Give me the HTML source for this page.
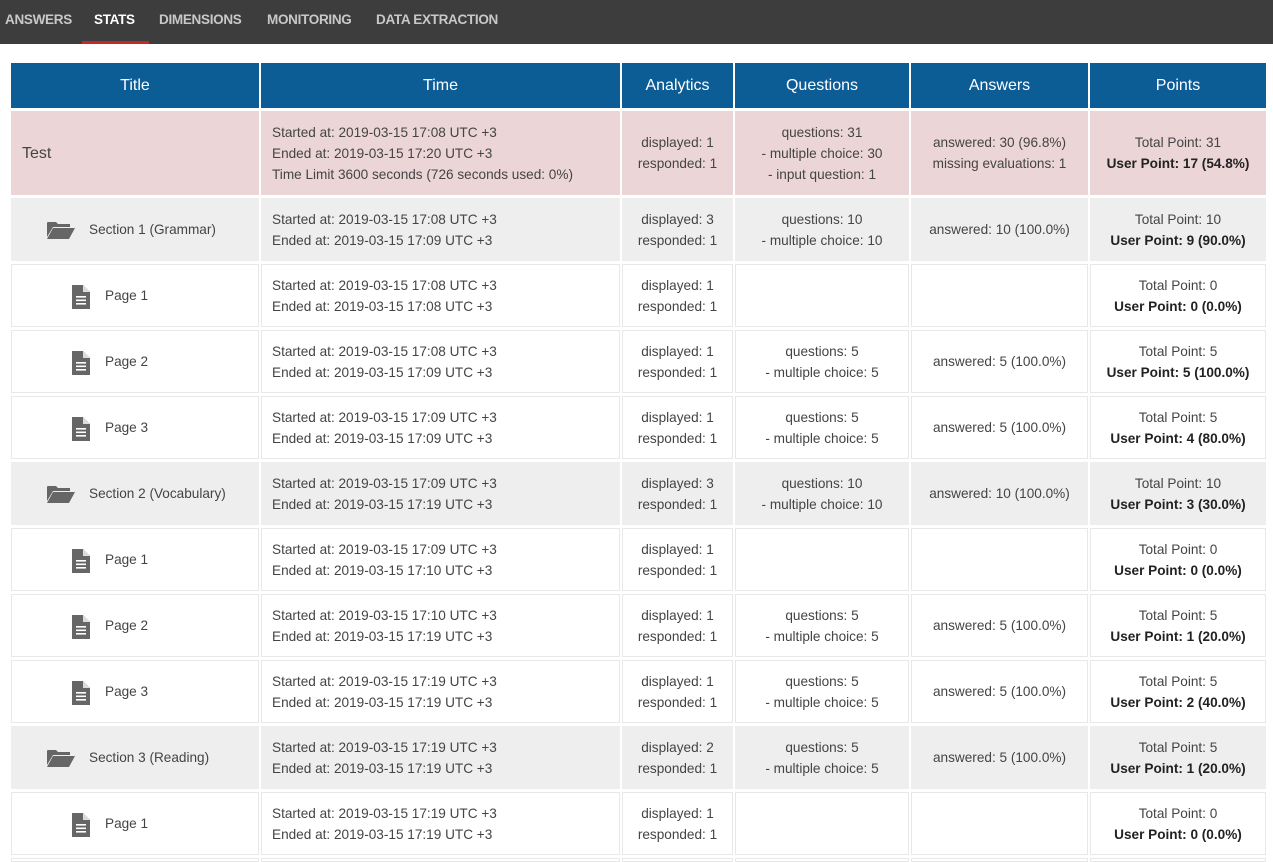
<!DOCTYPE html>
<html style="overflow:hidden;height:862px"><head><meta charset="utf-8"><style>
*{box-sizing:border-box}
body{margin:0;width:1273px;height:862px;overflow:hidden;background:#fff;font-family:"Liberation Sans",Arial,sans-serif;color:#444;position:relative}
.nav{height:44px;background:#3d3d3d;position:relative}
.nav span{position:absolute;top:12px;font-size:13.5px;font-weight:bold;color:#c8c8c8;letter-spacing:-0.3px}
.nav .act{color:#fff}
.nav .ul{position:absolute;left:82px;top:41px;width:67px;height:3px;background:#c62828}
table{position:absolute;left:9px;top:60px;width:1259px;border-collapse:separate;border-spacing:2px 3px;table-layout:fixed}
td,th{padding:0;font-size:13.6px;line-height:21px;text-align:center;vertical-align:middle;white-space:nowrap}
th{background:#0c5c96;color:#fff;font-size:16px;font-weight:normal;height:45px}
td{border:1px solid #e8e8e8;height:63px;background:#fff}
tr.t td{background:#ecd5d6;border-color:#ecd5d6;height:84px}
tr.s td{background:#eeeeee;border-color:#eeeeee}
td.tm{text-align:left;padding-left:10px}
td.ti{text-align:left;position:relative}
.test{font-size:16px;padding-left:10px}
.sec{padding-left:77px}
.pg{padding-left:93px}
svg{position:absolute}
b{color:#222}
</style></head><body>
<div class="nav"><span style="left:5px">ANSWERS</span><span class="act" style="left:94px">STATS</span><span style="left:159px">DIMENSIONS</span><span style="left:267px">MONITORING</span><span style="left:376px">DATA EXTRACTION</span><div class="ul"></div></div>
<table>
<colgroup><col style="width:248px"><col style="width:359px"><col style="width:111px"><col style="width:174px"><col style="width:177px"><col style="width:176px"></colgroup>
<tr><th>Title</th><th>Time</th><th>Analytics</th><th>Questions</th><th>Answers</th><th>Points</th></tr>
<tr class="t"><td class="ti test">Test</td><td class="tm">Started at: 2019-03-15 17:08 UTC +3<br>Ended at: 2019-03-15 17:20 UTC +3<br>Time Limit 3600 seconds (726 seconds used: 0%)</td><td>displayed: 1<br>responded: 1</td><td>questions: 31<br>- multiple choice: 30<br>- input question: 1</td><td>answered: 30 (96.8%)<br>missing evaluations: 1</td><td>Total Point: 31<br><b>User Point: 17 (54.8%)</b></td></tr>
<tr class="s"><td class="ti sec"><svg style="left:35px;top:23px" width="28" height="17" viewBox="0 0 28 17"><path d="M0 1Q0 0 1 0H9L11 2H23V5H6L0 15Z" fill="#666"/><path d="M6 6H28L22 17H0Z" fill="#666"/></svg>Section 1 (Grammar)</td><td class="tm">Started at: 2019-03-15 17:08 UTC +3<br>Ended at: 2019-03-15 17:09 UTC +3</td><td>displayed: 3<br>responded: 1</td><td>questions: 10<br>- multiple choice: 10</td><td>answered: 10 (100.0%)</td><td>Total Point: 10<br><b>User Point: 9 (90.0%)</b></td></tr>
<tr><td class="ti pg"><svg style="left:60px;top:20px" width="18" height="24" viewBox="0 0 18 24"><path d="M0 0H11L18 7V24H0Z" fill="#666"/><path d="M11 0V7H18" fill="#ddd"/><rect x="4" y="11" width="10" height="1.6" fill="#fff"/><rect x="4" y="14.5" width="10" height="1.6" fill="#fff"/><rect x="4" y="18" width="10" height="1.6" fill="#fff"/></svg>Page 1</td><td class="tm">Started at: 2019-03-15 17:08 UTC +3<br>Ended at: 2019-03-15 17:08 UTC +3</td><td>displayed: 1<br>responded: 1</td><td></td><td></td><td>Total Point: 0<br><b>User Point: 0 (0.0%)</b></td></tr>
<tr><td class="ti pg"><svg style="left:60px;top:20px" width="18" height="24" viewBox="0 0 18 24"><path d="M0 0H11L18 7V24H0Z" fill="#666"/><path d="M11 0V7H18" fill="#ddd"/><rect x="4" y="11" width="10" height="1.6" fill="#fff"/><rect x="4" y="14.5" width="10" height="1.6" fill="#fff"/><rect x="4" y="18" width="10" height="1.6" fill="#fff"/></svg>Page 2</td><td class="tm">Started at: 2019-03-15 17:08 UTC +3<br>Ended at: 2019-03-15 17:09 UTC +3</td><td>displayed: 1<br>responded: 1</td><td>questions: 5<br>- multiple choice: 5</td><td>answered: 5 (100.0%)</td><td>Total Point: 5<br><b>User Point: 5 (100.0%)</b></td></tr>
<tr><td class="ti pg"><svg style="left:60px;top:20px" width="18" height="24" viewBox="0 0 18 24"><path d="M0 0H11L18 7V24H0Z" fill="#666"/><path d="M11 0V7H18" fill="#ddd"/><rect x="4" y="11" width="10" height="1.6" fill="#fff"/><rect x="4" y="14.5" width="10" height="1.6" fill="#fff"/><rect x="4" y="18" width="10" height="1.6" fill="#fff"/></svg>Page 3</td><td class="tm">Started at: 2019-03-15 17:09 UTC +3<br>Ended at: 2019-03-15 17:09 UTC +3</td><td>displayed: 1<br>responded: 1</td><td>questions: 5<br>- multiple choice: 5</td><td>answered: 5 (100.0%)</td><td>Total Point: 5<br><b>User Point: 4 (80.0%)</b></td></tr>
<tr class="s"><td class="ti sec"><svg style="left:35px;top:23px" width="28" height="17" viewBox="0 0 28 17"><path d="M0 1Q0 0 1 0H9L11 2H23V5H6L0 15Z" fill="#666"/><path d="M6 6H28L22 17H0Z" fill="#666"/></svg>Section 2 (Vocabulary)</td><td class="tm">Started at: 2019-03-15 17:09 UTC +3<br>Ended at: 2019-03-15 17:19 UTC +3</td><td>displayed: 3<br>responded: 1</td><td>questions: 10<br>- multiple choice: 10</td><td>answered: 10 (100.0%)</td><td>Total Point: 10<br><b>User Point: 3 (30.0%)</b></td></tr>
<tr><td class="ti pg"><svg style="left:60px;top:20px" width="18" height="24" viewBox="0 0 18 24"><path d="M0 0H11L18 7V24H0Z" fill="#666"/><path d="M11 0V7H18" fill="#ddd"/><rect x="4" y="11" width="10" height="1.6" fill="#fff"/><rect x="4" y="14.5" width="10" height="1.6" fill="#fff"/><rect x="4" y="18" width="10" height="1.6" fill="#fff"/></svg>Page 1</td><td class="tm">Started at: 2019-03-15 17:09 UTC +3<br>Ended at: 2019-03-15 17:10 UTC +3</td><td>displayed: 1<br>responded: 1</td><td></td><td></td><td>Total Point: 0<br><b>User Point: 0 (0.0%)</b></td></tr>
<tr><td class="ti pg"><svg style="left:60px;top:20px" width="18" height="24" viewBox="0 0 18 24"><path d="M0 0H11L18 7V24H0Z" fill="#666"/><path d="M11 0V7H18" fill="#ddd"/><rect x="4" y="11" width="10" height="1.6" fill="#fff"/><rect x="4" y="14.5" width="10" height="1.6" fill="#fff"/><rect x="4" y="18" width="10" height="1.6" fill="#fff"/></svg>Page 2</td><td class="tm">Started at: 2019-03-15 17:10 UTC +3<br>Ended at: 2019-03-15 17:19 UTC +3</td><td>displayed: 1<br>responded: 1</td><td>questions: 5<br>- multiple choice: 5</td><td>answered: 5 (100.0%)</td><td>Total Point: 5<br><b>User Point: 1 (20.0%)</b></td></tr>
<tr><td class="ti pg"><svg style="left:60px;top:20px" width="18" height="24" viewBox="0 0 18 24"><path d="M0 0H11L18 7V24H0Z" fill="#666"/><path d="M11 0V7H18" fill="#ddd"/><rect x="4" y="11" width="10" height="1.6" fill="#fff"/><rect x="4" y="14.5" width="10" height="1.6" fill="#fff"/><rect x="4" y="18" width="10" height="1.6" fill="#fff"/></svg>Page 3</td><td class="tm">Started at: 2019-03-15 17:19 UTC +3<br>Ended at: 2019-03-15 17:19 UTC +3</td><td>displayed: 1<br>responded: 1</td><td>questions: 5<br>- multiple choice: 5</td><td>answered: 5 (100.0%)</td><td>Total Point: 5<br><b>User Point: 2 (40.0%)</b></td></tr>
<tr class="s"><td class="ti sec"><svg style="left:35px;top:23px" width="28" height="17" viewBox="0 0 28 17"><path d="M0 1Q0 0 1 0H9L11 2H23V5H6L0 15Z" fill="#666"/><path d="M6 6H28L22 17H0Z" fill="#666"/></svg>Section 3 (Reading)</td><td class="tm">Started at: 2019-03-15 17:19 UTC +3<br>Ended at: 2019-03-15 17:19 UTC +3</td><td>displayed: 2<br>responded: 1</td><td>questions: 5<br>- multiple choice: 5</td><td>answered: 5 (100.0%)</td><td>Total Point: 5<br><b>User Point: 1 (20.0%)</b></td></tr>
<tr><td class="ti pg"><svg style="left:60px;top:20px" width="18" height="24" viewBox="0 0 18 24"><path d="M0 0H11L18 7V24H0Z" fill="#666"/><path d="M11 0V7H18" fill="#ddd"/><rect x="4" y="11" width="10" height="1.6" fill="#fff"/><rect x="4" y="14.5" width="10" height="1.6" fill="#fff"/><rect x="4" y="18" width="10" height="1.6" fill="#fff"/></svg>Page 1</td><td class="tm">Started at: 2019-03-15 17:19 UTC +3<br>Ended at: 2019-03-15 17:19 UTC +3</td><td>displayed: 1<br>responded: 1</td><td></td><td></td><td>Total Point: 0<br><b>User Point: 0 (0.0%)</b></td></tr>
<tr><td style="height:4px"></td><td style="height:4px"></td><td style="height:4px"></td><td style="height:4px"></td><td style="height:4px"></td><td style="height:4px"></td></tr>
</table>
</body></html>
